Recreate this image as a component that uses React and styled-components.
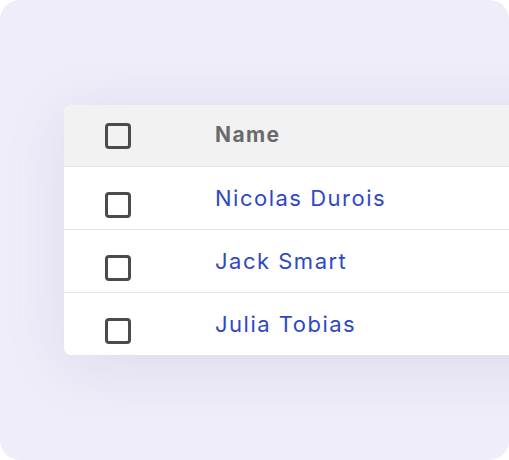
import React from 'react';
import styled, { createGlobalStyle } from 'styled-components';

const GlobalStyle = createGlobalStyle`
  html, body {
    margin: 0;
    padding: 0;
    background: #ffffff;
  }
`;

// outer lavender panel
const Panel = styled.div`
  width: 509px;
  height: 460px;
  box-sizing: border-box;
  border-radius: 20px;
  overflow: hidden;
  background: #efedf9;
  padding: 105px 0 0 64px;
  font-family: Inter, "Noto Sans", "Liberation Sans", sans-serif;
`;

const Card = styled.div`
  width: 520px;
  background: #ffffff;
  border-radius: 8px;
  overflow: hidden;
  box-shadow: 0 10px 60px rgba(110, 96, 170, 0.14);
`;

const Row = styled.div`
  display: grid;
  grid-template-columns: 151px 1fr;
  align-items: center;
  height: ${p => (p.$header ? '61px' : '62px')};
  background: ${p => (p.$header ? '#f2f2f2' : '#ffffff')};
  border-top: ${p => (p.$first ? 'none' : '1px solid #e1e4e8')};
`;

const CheckCell = styled.div`
  padding-left: 41px;
  display: flex;
  align-items: center;
  padding-top: ${p => (p.$header ? '0' : '14px')};
`;

const Checkbox = styled.span`
  display: block;
  width: 26px;
  height: 26px;
  box-sizing: border-box;
  border: 3px solid #4b4b4b;
  border-radius: 4px;
`;

const HeaderText = styled.div`
  font-size: 21px;
  font-weight: 700;
  color: #6a6a6d;
  letter-spacing: 1.4px;
  padding-bottom: 2px;
`;

const NameLink = styled.a`
  font-size: 22px;
  color: #2f48c6;
  text-decoration: none;
  letter-spacing: 1.5px;
`;

const people = ['Nicolas Durois', 'Jack Smart', 'Julia Tobias'];

export default function App() {
  return (
    <>
      <GlobalStyle />
      <Panel>
        <Card>
          <Row $header $first>
            <CheckCell $header>
              <Checkbox />
            </CheckCell>
            <HeaderText>Name</HeaderText>
          </Row>
          {people.map(name => (
            <Row key={name}>
              <CheckCell>
                <Checkbox />
              </CheckCell>
              <NameLink href="#">{name}</NameLink>
            </Row>
          ))}
        </Card>
      </Panel>
    </>
  );
}
